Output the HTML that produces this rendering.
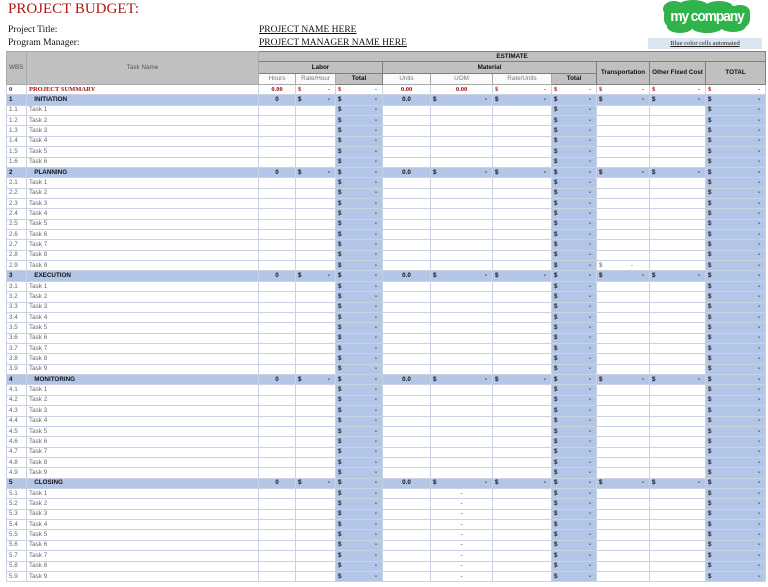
<!DOCTYPE html>
<html><head><meta charset="utf-8"><style>
*{margin:0;padding:0;box-sizing:border-box}
body{width:768px;height:587px;background:#fff;position:relative;overflow:hidden;font-family:"Liberation Sans",sans-serif}
.ser{font-family:"Liberation Serif",serif;position:absolute;white-space:nowrap}
table{position:absolute;left:6px;top:51px;width:759px;border-collapse:collapse;table-layout:fixed;font-size:6.3px}
td{border:1px solid #c9d2e3;padding:0 2px;height:10.36px;line-height:8px;overflow:hidden;white-space:nowrap;color:#333}
thead td{border:1px solid #7f7f7f;background:#c0c0c0;font-weight:bold;color:#111;text-align:center;font-size:6.3px}
thead tr.h1 td{height:10px}thead tr.h2 td{height:12px}thead tr.h3 td{height:11px}
thead td.lt{background:#fafafa;font-weight:normal;color:#777;border-color:#aaa}
td.t{color:#666}
td.w{color:#666}
td.b{background:#b4c6e7;font-weight:bold;color:#222}
td s{text-decoration:none;float:right;padding-right:3px;font-weight:bold}
td.c{text-align:center}
tr.s td{background:#b4c6e7;font-weight:bold;color:#111}
tr.s td.r{text-align:center}
tr.p td{color:#a01010;font-family:"Liberation Serif",serif;font-weight:bold;font-size:6.5px}
tr.p td.c{text-align:center}
.g{position:absolute;background:#2fb34a;border-radius:50%}
</style></head><body>
<div class="ser" style="left:8px;top:1px;font-size:15px;color:#b01818">PROJECT BUDGET:</div>
<div class="ser" style="left:8px;top:25px;font-size:9.5px;color:#111">Project Title:</div>
<div class="ser" style="left:8px;top:38px;font-size:9.5px;color:#111">Program Manager:</div>
<div class="ser" style="left:259px;top:25px;font-size:9.5px;color:#111;text-decoration:underline">PROJECT NAME HERE</div>
<div class="ser" style="left:259px;top:38px;font-size:9.5px;color:#111;text-decoration:underline">PROJECT MANAGER NAME HERE</div>
<div style="position:absolute;left:664px;top:6px;width:86px;height:22px;background:#2fb34a;border-radius:9px"></div>
<div class="g" style="left:663px;top:1px;width:22px;height:16px"></div>
<div class="g" style="left:678px;top:0px;width:30px;height:12px"></div>
<div class="g" style="left:705px;top:1px;width:28px;height:12px"></div>
<div class="g" style="left:730px;top:5px;width:20px;height:14px"></div>
<div class="g" style="left:667px;top:20px;width:26px;height:13px"></div>
<div class="g" style="left:692px;top:22px;width:30px;height:11px"></div>
<div class="g" style="left:720px;top:20px;width:26px;height:12px"></div>
<div style="position:absolute;left:664px;top:8px;width:86px;text-align:center;color:#fff;font-weight:bold;font-size:15px;letter-spacing:-1.2px;font-family:'Liberation Sans',sans-serif;transform:scaleX(0.92)">my company</div>
<div style="position:absolute;left:648px;top:38px;width:114px;height:11px;background:#dce6f2;text-align:center;font-family:'Liberation Serif',serif;font-size:6.5px;line-height:11px;text-decoration:underline;color:#222">Blue color cells automated</div>
<table>
<colgroup><col style="width:20px"><col style="width:232px"><col style="width:37px"><col style="width:40px"><col style="width:47px"><col style="width:48px"><col style="width:62px"><col style="width:59px"><col style="width:45px"><col style="width:53px"><col style="width:56px"><col style="width:60px"></colgroup>
<thead>
<tr class="h1"><td rowspan="3" class="lt" style="background:#c0c0c0;color:#555;text-align:left">WBS</td><td rowspan="3" class="lt" style="background:#c0c0c0;color:#555">Task Name</td><td colspan="10">ESTIMATE</td></tr>
<tr class="h2"><td colspan="3">Labor</td><td colspan="4">Material</td><td rowspan="2">Transportation</td><td rowspan="2">Other Fixed Cost</td><td rowspan="2">TOTAL</td></tr>
<tr class="h3"><td class="lt">Hours</td><td class="lt">Rate/Hour</td><td>Total</td><td class="lt">Units</td><td class="lt">UOM</td><td class="lt">Rate/Units</td><td>Total</td></tr>
</thead>
<tbody>
<tr class="p"><td>0</td><td>PROJECT SUMMARY</td><td class="c">0.00</td><td>$<s>-</s></td><td>$<s>-</s></td><td class="c">0.00</td><td class="c">0.00</td><td>$<s>-</s></td><td>$<s>-</s></td><td>$<s>-</s></td><td>$<s>-</s></td><td>$<s>-</s></td></tr>
<tr class="s"><td>1</td><td>&nbsp;&nbsp;&nbsp;INITIATION</td><td class="r">0</td><td>$<s>-</s></td><td>$<s>-</s></td><td class="r">0.0</td><td>$<s>-</s></td><td>$<s>-</s></td><td>$<s>-</s></td><td>$<s>-</s></td><td>$<s>-</s></td><td>$<s>-</s></td></tr>
<tr><td class="w">1.1</td><td class="t">Task 1</td><td></td><td></td><td class="b">$<s>-</s></td><td></td><td></td><td></td><td class="b">$<s>-</s></td><td></td><td></td><td class="b">$<s>-</s></td></tr>
<tr><td class="w">1.2</td><td class="t">Task 2</td><td></td><td></td><td class="b">$<s>-</s></td><td></td><td></td><td></td><td class="b">$<s>-</s></td><td></td><td></td><td class="b">$<s>-</s></td></tr>
<tr><td class="w">1.3</td><td class="t">Task 3</td><td></td><td></td><td class="b">$<s>-</s></td><td></td><td></td><td></td><td class="b">$<s>-</s></td><td></td><td></td><td class="b">$<s>-</s></td></tr>
<tr><td class="w">1.4</td><td class="t">Task 4</td><td></td><td></td><td class="b">$<s>-</s></td><td></td><td></td><td></td><td class="b">$<s>-</s></td><td></td><td></td><td class="b">$<s>-</s></td></tr>
<tr><td class="w">1.5</td><td class="t">Task 5</td><td></td><td></td><td class="b">$<s>-</s></td><td></td><td></td><td></td><td class="b">$<s>-</s></td><td></td><td></td><td class="b">$<s>-</s></td></tr>
<tr><td class="w">1.6</td><td class="t">Task 6</td><td></td><td></td><td class="b">$<s>-</s></td><td></td><td></td><td></td><td class="b">$<s>-</s></td><td></td><td></td><td class="b">$<s>-</s></td></tr>
<tr class="s"><td>2</td><td>&nbsp;&nbsp;&nbsp;PLANNING</td><td class="r">0</td><td>$<s>-</s></td><td>$<s>-</s></td><td class="r">0.0</td><td>$<s>-</s></td><td>$<s>-</s></td><td>$<s>-</s></td><td>$<s>-</s></td><td>$<s>-</s></td><td>$<s>-</s></td></tr>
<tr><td class="w">2.1</td><td class="t">Task 1</td><td></td><td></td><td class="b">$<s>-</s></td><td></td><td></td><td></td><td class="b">$<s>-</s></td><td></td><td></td><td class="b">$<s>-</s></td></tr>
<tr><td class="w">2.2</td><td class="t">Task 2</td><td></td><td></td><td class="b">$<s>-</s></td><td></td><td></td><td></td><td class="b">$<s>-</s></td><td></td><td></td><td class="b">$<s>-</s></td></tr>
<tr><td class="w">2.3</td><td class="t">Task 3</td><td></td><td></td><td class="b">$<s>-</s></td><td></td><td></td><td></td><td class="b">$<s>-</s></td><td></td><td></td><td class="b">$<s>-</s></td></tr>
<tr><td class="w">2.4</td><td class="t">Task 4</td><td></td><td></td><td class="b">$<s>-</s></td><td></td><td></td><td></td><td class="b">$<s>-</s></td><td></td><td></td><td class="b">$<s>-</s></td></tr>
<tr><td class="w">2.5</td><td class="t">Task 5</td><td></td><td></td><td class="b">$<s>-</s></td><td></td><td></td><td></td><td class="b">$<s>-</s></td><td></td><td></td><td class="b">$<s>-</s></td></tr>
<tr><td class="w">2.6</td><td class="t">Task 6</td><td></td><td></td><td class="b">$<s>-</s></td><td></td><td></td><td></td><td class="b">$<s>-</s></td><td></td><td></td><td class="b">$<s>-</s></td></tr>
<tr><td class="w">2.7</td><td class="t">Task 7</td><td></td><td></td><td class="b">$<s>-</s></td><td></td><td></td><td></td><td class="b">$<s>-</s></td><td></td><td></td><td class="b">$<s>-</s></td></tr>
<tr><td class="w">2.8</td><td class="t">Task 8</td><td></td><td></td><td class="b">$<s>-</s></td><td></td><td></td><td></td><td class="b">$<s>-</s></td><td></td><td></td><td class="b">$<s>-</s></td></tr>
<tr><td class="w">2.9</td><td class="t">Task 9</td><td></td><td></td><td class="b">$<s>-</s></td><td></td><td></td><td></td><td class="b">$<s>-</s></td><td class="w">$<s style="padding-right:14px;font-weight:normal">-</s></td><td></td><td class="b">$<s>-</s></td></tr>
<tr class="s"><td>3</td><td>&nbsp;&nbsp;&nbsp;EXECUTION</td><td class="r">0</td><td>$<s>-</s></td><td>$<s>-</s></td><td class="r">0.0</td><td>$<s>-</s></td><td>$<s>-</s></td><td>$<s>-</s></td><td>$<s>-</s></td><td>$<s>-</s></td><td>$<s>-</s></td></tr>
<tr><td class="w">3.1</td><td class="t">Task 1</td><td></td><td></td><td class="b">$<s>-</s></td><td></td><td></td><td></td><td class="b">$<s>-</s></td><td></td><td></td><td class="b">$<s>-</s></td></tr>
<tr><td class="w">3.2</td><td class="t">Task 2</td><td></td><td></td><td class="b">$<s>-</s></td><td></td><td></td><td></td><td class="b">$<s>-</s></td><td></td><td></td><td class="b">$<s>-</s></td></tr>
<tr><td class="w">3.3</td><td class="t">Task 3</td><td></td><td></td><td class="b">$<s>-</s></td><td></td><td></td><td></td><td class="b">$<s>-</s></td><td></td><td></td><td class="b">$<s>-</s></td></tr>
<tr><td class="w">3.4</td><td class="t">Task 4</td><td></td><td></td><td class="b">$<s>-</s></td><td></td><td></td><td></td><td class="b">$<s>-</s></td><td></td><td></td><td class="b">$<s>-</s></td></tr>
<tr><td class="w">3.5</td><td class="t">Task 5</td><td></td><td></td><td class="b">$<s>-</s></td><td></td><td></td><td></td><td class="b">$<s>-</s></td><td></td><td></td><td class="b">$<s>-</s></td></tr>
<tr><td class="w">3.6</td><td class="t">Task 6</td><td></td><td></td><td class="b">$<s>-</s></td><td></td><td></td><td></td><td class="b">$<s>-</s></td><td></td><td></td><td class="b">$<s>-</s></td></tr>
<tr><td class="w">3.7</td><td class="t">Task 7</td><td></td><td></td><td class="b">$<s>-</s></td><td></td><td></td><td></td><td class="b">$<s>-</s></td><td></td><td></td><td class="b">$<s>-</s></td></tr>
<tr><td class="w">3.8</td><td class="t">Task 8</td><td></td><td></td><td class="b">$<s>-</s></td><td></td><td></td><td></td><td class="b">$<s>-</s></td><td></td><td></td><td class="b">$<s>-</s></td></tr>
<tr><td class="w">3.9</td><td class="t">Task 9</td><td></td><td></td><td class="b">$<s>-</s></td><td></td><td></td><td></td><td class="b">$<s>-</s></td><td></td><td></td><td class="b">$<s>-</s></td></tr>
<tr class="s"><td>4</td><td>&nbsp;&nbsp;&nbsp;MONITORING</td><td class="r">0</td><td>$<s>-</s></td><td>$<s>-</s></td><td class="r">0.0</td><td>$<s>-</s></td><td>$<s>-</s></td><td>$<s>-</s></td><td>$<s>-</s></td><td>$<s>-</s></td><td>$<s>-</s></td></tr>
<tr><td class="w">4.1</td><td class="t">Task 1</td><td></td><td></td><td class="b">$<s>-</s></td><td></td><td></td><td></td><td class="b">$<s>-</s></td><td></td><td></td><td class="b">$<s>-</s></td></tr>
<tr><td class="w">4.2</td><td class="t">Task 2</td><td></td><td></td><td class="b">$<s>-</s></td><td></td><td></td><td></td><td class="b">$<s>-</s></td><td></td><td></td><td class="b">$<s>-</s></td></tr>
<tr><td class="w">4.3</td><td class="t">Task 3</td><td></td><td></td><td class="b">$<s>-</s></td><td></td><td></td><td></td><td class="b">$<s>-</s></td><td></td><td></td><td class="b">$<s>-</s></td></tr>
<tr><td class="w">4.4</td><td class="t">Task 4</td><td></td><td></td><td class="b">$<s>-</s></td><td></td><td></td><td></td><td class="b">$<s>-</s></td><td></td><td></td><td class="b">$<s>-</s></td></tr>
<tr><td class="w">4.5</td><td class="t">Task 5</td><td></td><td></td><td class="b">$<s>-</s></td><td></td><td></td><td></td><td class="b">$<s>-</s></td><td></td><td></td><td class="b">$<s>-</s></td></tr>
<tr><td class="w">4.6</td><td class="t">Task 6</td><td></td><td></td><td class="b">$<s>-</s></td><td></td><td></td><td></td><td class="b">$<s>-</s></td><td></td><td></td><td class="b">$<s>-</s></td></tr>
<tr><td class="w">4.7</td><td class="t">Task 7</td><td></td><td></td><td class="b">$<s>-</s></td><td></td><td></td><td></td><td class="b">$<s>-</s></td><td></td><td></td><td class="b">$<s>-</s></td></tr>
<tr><td class="w">4.8</td><td class="t">Task 8</td><td></td><td></td><td class="b">$<s>-</s></td><td></td><td></td><td></td><td class="b">$<s>-</s></td><td></td><td></td><td class="b">$<s>-</s></td></tr>
<tr><td class="w">4.9</td><td class="t">Task 9</td><td></td><td></td><td class="b">$<s>-</s></td><td></td><td></td><td></td><td class="b">$<s>-</s></td><td></td><td></td><td class="b">$<s>-</s></td></tr>
<tr class="s"><td>5</td><td>&nbsp;&nbsp;&nbsp;CLOSING</td><td class="r">0</td><td>$<s>-</s></td><td>$<s>-</s></td><td class="r">0.0</td><td>$<s>-</s></td><td>$<s>-</s></td><td>$<s>-</s></td><td>$<s>-</s></td><td>$<s>-</s></td><td>$<s>-</s></td></tr>
<tr><td class="w">5.1</td><td class="t">Task 1</td><td></td><td></td><td class="b">$<s>-</s></td><td></td><td class="c">-</td><td></td><td class="b">$<s>-</s></td><td></td><td></td><td class="b">$<s>-</s></td></tr>
<tr><td class="w">5.2</td><td class="t">Task 2</td><td></td><td></td><td class="b">$<s>-</s></td><td></td><td class="c">-</td><td></td><td class="b">$<s>-</s></td><td></td><td></td><td class="b">$<s>-</s></td></tr>
<tr><td class="w">5.3</td><td class="t">Task 3</td><td></td><td></td><td class="b">$<s>-</s></td><td></td><td class="c">-</td><td></td><td class="b">$<s>-</s></td><td></td><td></td><td class="b">$<s>-</s></td></tr>
<tr><td class="w">5.4</td><td class="t">Task 4</td><td></td><td></td><td class="b">$<s>-</s></td><td></td><td class="c">-</td><td></td><td class="b">$<s>-</s></td><td></td><td></td><td class="b">$<s>-</s></td></tr>
<tr><td class="w">5.5</td><td class="t">Task 5</td><td></td><td></td><td class="b">$<s>-</s></td><td></td><td class="c">-</td><td></td><td class="b">$<s>-</s></td><td></td><td></td><td class="b">$<s>-</s></td></tr>
<tr><td class="w">5.6</td><td class="t">Task 6</td><td></td><td></td><td class="b">$<s>-</s></td><td></td><td class="c">-</td><td></td><td class="b">$<s>-</s></td><td></td><td></td><td class="b">$<s>-</s></td></tr>
<tr><td class="w">5.7</td><td class="t">Task 7</td><td></td><td></td><td class="b">$<s>-</s></td><td></td><td class="c">-</td><td></td><td class="b">$<s>-</s></td><td></td><td></td><td class="b">$<s>-</s></td></tr>
<tr><td class="w">5.8</td><td class="t">Task 8</td><td></td><td></td><td class="b">$<s>-</s></td><td></td><td class="c">-</td><td></td><td class="b">$<s>-</s></td><td></td><td></td><td class="b">$<s>-</s></td></tr>
<tr><td class="w">5.9</td><td class="t">Task 9</td><td></td><td></td><td class="b">$<s>-</s></td><td></td><td class="c">-</td><td></td><td class="b">$<s>-</s></td><td></td><td></td><td class="b">$<s>-</s></td></tr>
</tbody></table>
</body></html>
